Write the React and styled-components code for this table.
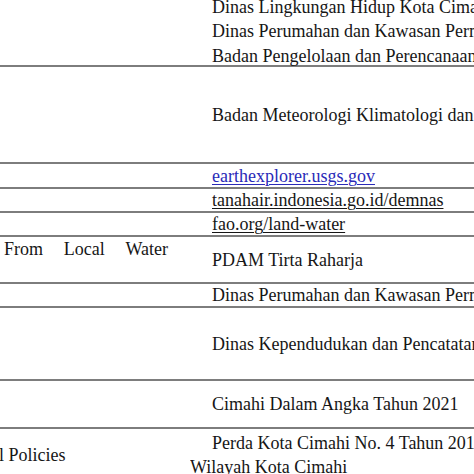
import styled, { createGlobalStyle } from "styled-components";

const GlobalStyle = createGlobalStyle`
  html, body {
    margin: 0;
    padding: 0;
    background: #fff;
    overflow: hidden;
  }
  body {
    font-family: "Liberation Serif", "Times New Roman", serif;
    font-size: 18px;
    color: #161616;
  }
`;

const Table = styled.div`
  width: 474px;
  display: flex;
  flex-direction: column;
  overflow: hidden;
`;

const Row = styled.div`
  display: grid;
  grid-template-columns: 190px minmax(0, 1fr);
  height: ${({h}) => h}px;
  border-bottom: ${({last}) => last ? "none" : "2px solid #7d7d7d"};
  box-sizing: border-box;
  align-items: ${({align}) => align || "center"};
`;

const LeftCell = styled.div`
  line-height: 24px;
  align-self: ${({top}) => top ? "start" : "center"};
  white-space: nowrap;
  overflow: hidden;
`;

const Spread = styled.div`
  display: flex;
  justify-content: space-between;
  width: 164px;
  padding-left: 4px;
`;

const Shifted = styled.div`
  margin-left: ${({shift}) => shift}px;
`;

const RightCell = styled.div`
  line-height: ${({lh}) => lh || 24}px;
  white-space: nowrap;
  overflow: hidden;
  text-align: left;
  margin-bottom: ${({mb}) => mb || 0}px;
`;

const Line = styled.div`
  padding-left: ${({flush}) => flush ? 0 : 22}px;
  overflow: hidden;
`;

const Link = styled.span`
  text-decoration: underline;
  text-decoration-thickness: 1px;
  text-underline-offset: 2px;
  color: ${({blue}) => blue ? "#2a2ab8" : "#161616"};
`;

const App = () => (
  <>
    <GlobalStyle/>
    <Table>
      <Row h={67} align="end">
        <div/>
        <RightCell lh={24.5} mb={-3}>
          <Line>Dinas Lingkungan Hidup Kota Cimahi</Line>
          <Line>Dinas Perumahan dan Kawasan Permukiman</Line>
          <Line>Badan Pengelolaan dan Perencanaan Daerah</Line>
        </RightCell>
      </Row>
      <Row h={97}>
        <div/>
        <RightCell>
          <Line>Badan Meteorologi Klimatologi dan Geofisika</Line>
        </RightCell>
      </Row>
      <Row h={25}>
        <div/>
        <RightCell>
          <Line><Link blue>earthexplorer.usgs.gov</Link></Line>
        </RightCell>
      </Row>
      <Row h={24}>
        <div/>
        <RightCell>
          <Line><Link>tanahair.indonesia.go.id/demnas</Link></Line>
        </RightCell>
      </Row>
      <Row h={24}>
        <div/>
        <RightCell>
          <Line><Link>fao.org/land-water</Link></Line>
        </RightCell>
      </Row>
      <Row h={47}>
        <LeftCell top>
          <Spread>
            <span>From</span>
            <span>Local</span>
            <span>Water</span>
          </Spread>
        </LeftCell>
        <RightCell>
          <Line>PDAM Tirta Raharja</Line>
        </RightCell>
      </Row>
      <Row h={24}>
        <div/>
        <RightCell>
          <Line>Dinas Perumahan dan Kawasan Permukiman</Line>
        </RightCell>
      </Row>
      <Row h={73}>
        <div/>
        <RightCell>
          <Line>Dinas Kependudukan dan Pencatatan Sipil</Line>
        </RightCell>
      </Row>
      <Row h={48}>
        <div/>
        <RightCell>
          <Line>Cimahi Dalam Angka Tahun 2021</Line>
        </RightCell>
      </Row>
      <Row h={52} last>
        <LeftCell>
          <Shifted shift={-46}>Spatial Policies</Shifted>
        </LeftCell>
        <RightCell>
          <Line>Perda Kota Cimahi No. 4 Tahun 2013 tentang Rencana Tata Ruang</Line>
          <Line flush>Wilayah Kota Cimahi</Line>
        </RightCell>
      </Row>
    </Table>
  </>
);

export default App;
